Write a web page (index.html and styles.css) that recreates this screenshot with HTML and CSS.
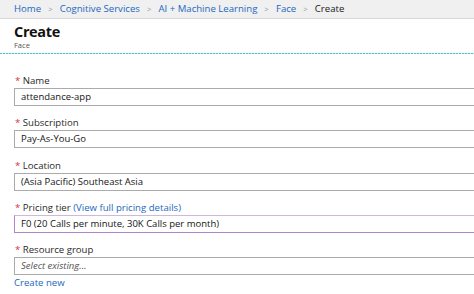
FILE: index.html
```html
<!DOCTYPE html>
<html>
<head>
<meta charset="utf-8">
<link rel="stylesheet" href="styles.css">
</head>
<body>
<nav class="crumbs">
  <a>Home</a><span class="sep">&gt;</span><a>Cognitive Services</a><span class="sep">&gt;</span><a>AI + Machine Learning</a><span class="sep">&gt;</span><a>Face</a><span class="sep">&gt;</span><span class="cur">Create</span>
</nav>
<header class="head">
  <h1 class="title">Create</h1>
  <div class="sub">Face</div>
</header>
<form class="form">
  <div class="field">
    <label class="label"><span class="req">*</span> Name</label>
    <div class="input">attendance-app</div>
  </div>
  <div class="field">
    <label class="label"><span class="req">*</span> Subscription</label>
    <div class="input">Pay-As-You-Go</div>
  </div>
  <div class="field">
    <label class="label"><span class="req">*</span> Location</label>
    <div class="input">(Asia Pacific) Southeast Asia</div>
  </div>
  <div class="field">
    <label class="label"><span class="req">*</span> Pricing tier <a class="link">(View full pricing details)</a></label>
    <div class="input active">F0 (20 Calls per minute, 30K Calls per month)</div>
  </div>
  <div class="field">
    <label class="label"><span class="req">*</span> Resource group</label>
    <div class="input placeholder">Select existing...</div>
    <a class="link create">Create new</a>
  </div>
</form>
</body>
</html>
```
FILE: styles.css
```css
html, body {
  margin: 0;
  padding: 0;
  background: #fff;
  font-family: "Open Sans", "Noto Sans", sans-serif;
  color: #1a1a1a;
  overflow: hidden;
}
.crumbs {
  height: 18px;
  background: #f0f0f0;
  border-bottom: 1px solid #d8d8d8;
  padding-left: 14px;
  font-size: 9.6px;
  font-weight: 500;
  line-height: 18px;
  white-space: nowrap;
}
.crumbs a { color: #2468c0; }
.crumbs .sep { color: #9a9a9a; margin: 0 7px; font-size: 8px; }
.crumbs .cur { color: #1a1a1a; }
.head {
  padding: 4px 14px 4px;
  background: repeating-linear-gradient(90deg, #45c6c8 0 2px, #c8eeee 2px 3px) left bottom / 100% 1px no-repeat;
}
.title {
  margin: 0;
  font-size: 14.5px;
  font-weight: 700;
  letter-spacing: -0.35px;
  line-height: 17px;
  color: #111;
}
.sub {
  font-size: 7.5px;
  color: #555;
  line-height: 10px;
}
.form {
  padding: 21px 0 0 14px;
  display: flex;
  flex-direction: column;
  gap: 11.25px;
}
.field {
  display: flex;
  flex-direction: column;
}
.label {
  font-size: 9.6px;
  font-weight: 500;
  line-height: 12px;
  color: #2a2a2a;
  padding-left: 1px;
}
.req { color: #d13438; }
.link { color: #2468c0; }
.input {
  height: 16px;
  border: 1px solid #ababab;
  border-right: none;
  margin-top: 1px;
  padding-left: 6px;
  font-size: 9.5px;
  font-weight: 500;
  line-height: 16px;
  color: #141414;
  white-space: nowrap;
}
.input.active { border-color: #ad86cc; border-top-color: #cdb9e0; }
.input.placeholder { font-style: italic; color: #555; }
.create { font-size: 9.6px; font-weight: 500; line-height: 12px; margin-top: 2px; }
```
